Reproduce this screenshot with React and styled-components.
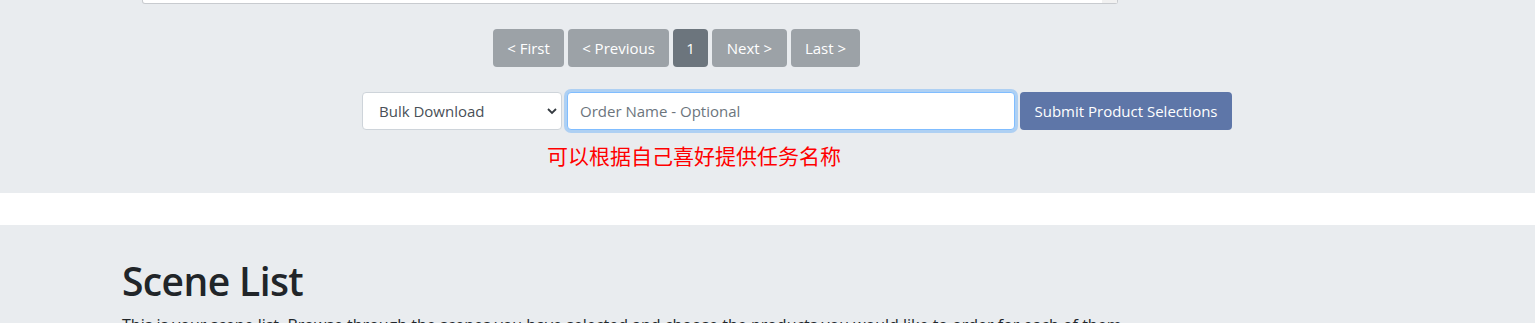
import React from 'react';
import styled, { createGlobalStyle } from 'styled-components';

const GlobalStyle = createGlobalStyle`
  html, body {
    margin: 0;
    padding: 0;
    background: #e9ecef;
  }
  body {
    font-family: "Open Sans", "Noto Sans", "Liberation Sans", sans-serif;
    color: #212529;
    overflow: hidden;
  }
`;

const pages = [
  { label: '< First', width: 71 },
  { label: '< Previous', width: 101 },
  { label: '1', width: 35, active: true },
  { label: 'Next >', width: 75 },
  { label: 'Last >', width: 69 },
];

const App = () => (
  <Page>
    <GlobalStyle />
    <OrderSection>
      <TableCard>
        <ScrollTrack />
      </TableCard>
      <Pagination>
        {pages.map(page => (
          <PageButton key={page.label} $width={page.width} $active={page.active}>
            {page.label}
          </PageButton>
        ))}
      </Pagination>
      <FormRow>
        <SelectWrap>
          <Select defaultValue="bulk">
            <option value="bulk">Bulk Download</option>
          </Select>
          <Chevron viewBox="0 0 12 12">
            <path d="M2 4 L6 8 L10 4" fill="none" stroke="#343a40" strokeWidth="1.8" />
          </Chevron>
        </SelectWrap>
        <OrderInput placeholder="Order Name - Optional" />
        <SubmitButton>Submit Product Selections</SubmitButton>
      </FormRow>
      <Note>可以根据自己喜好提供任务名称</Note>
    </OrderSection>
    <Divider />
    <SceneSection>
      <Title>Scene List</Title>
      <Lead>
        This is your scene list. Browse through the scenes you have selected and choose the
        products you would like to order for each of them.
      </Lead>
    </SceneSection>
  </Page>
);

export default App;

const Page = styled.div`
  width: 1535px;
  height: 323px;
  overflow: hidden;
`;

const OrderSection = styled.section`
  height: 193px;
  background: #e9ecef;
  display: flex;
  flex-direction: column;
`;

const TableCard = styled.div`
  margin-left: 142px;
  width: 976px;
  height: 4px;
  box-sizing: border-box;
  background: #fff;
  border: 1px solid #c8cbcf;
  border-top: none;
  border-radius: 0 0 3px 3px;
  display: flex;
  justify-content: flex-end;
`;

const ScrollTrack = styled.div`
  width: 15px;
  background: #f1f1f1;
`;

const Pagination = styled.div`
  margin: 25px 0 0 493px;
  display: flex;
  gap: 4px;
`;

const PageButton = styled.button`
  width: ${props => props.$width}px;
  height: 38px;
  padding: 0;
  border: none;
  border-radius: 4px;
  background: ${props => (props.$active ? '#6c757d' : '#9ca2a7')};
  color: #fff;
  font-family: inherit;
  font-size: 15px;
`;

const FormRow = styled.div`
  margin: 25px 0 0 362px;
  display: flex;
  align-items: center;
  height: 38px;
`;

const SelectWrap = styled.div`
  position: relative;
  width: 200px;
  height: 38px;
`;

const Select = styled.select`
  appearance: none;
  width: 100%;
  height: 100%;
  box-sizing: border-box;
  border: 1px solid #ced4da;
  border-radius: 4px;
  background: #fff;
  padding: 0 16px;
  font-family: inherit;
  font-size: 15px;
  color: #495057;
`;

const Chevron = styled.svg`
  position: absolute;
  right: 4px;
  top: 13px;
  width: 12px;
  height: 12px;
  pointer-events: none;
`;

const OrderInput = styled.input`
  margin-left: 5px;
  width: 448px;
  height: 38px;
  box-sizing: border-box;
  border: 1px solid #80bdff;
  border-radius: 4px;
  box-shadow: 0 0 0 3px rgba(0, 123, 255, 0.25);
  padding: 0 12px;
  font-family: inherit;
  font-size: 15px;
  outline: none;
  &::placeholder {
    color: #6c757d;
  }
`;

const SubmitButton = styled.button`
  margin-left: 5px;
  width: 212px;
  height: 38px;
  border: none;
  border-radius: 4px;
  background: #5e76a8;
  color: #fff;
  font-family: inherit;
  font-size: 15px;
  padding: 0;
`;

const Note = styled.div`
  margin: 10px 0 0 547px;
  color: #ff0000;
  font-family: "Noto Sans CJK SC", sans-serif;
  font-size: 21px;
  line-height: 31px;
`;

const Divider = styled.div`
  height: 32px;
  background: #fff;
`;

const SceneSection = styled.section`
  background: #e9ecef;
  padding: 32px 0 0 122px;
`;

const Title = styled.h1`
  margin: 0 0 8px;
  font-size: 39px;
  font-weight: 600;
  letter-spacing: -0.6px;
  line-height: 48px;
  color: #212529;
`;

const Lead = styled.p`
  margin: 0;
  font-size: 16px;
  line-height: 24px;
  color: #212529;
`;
